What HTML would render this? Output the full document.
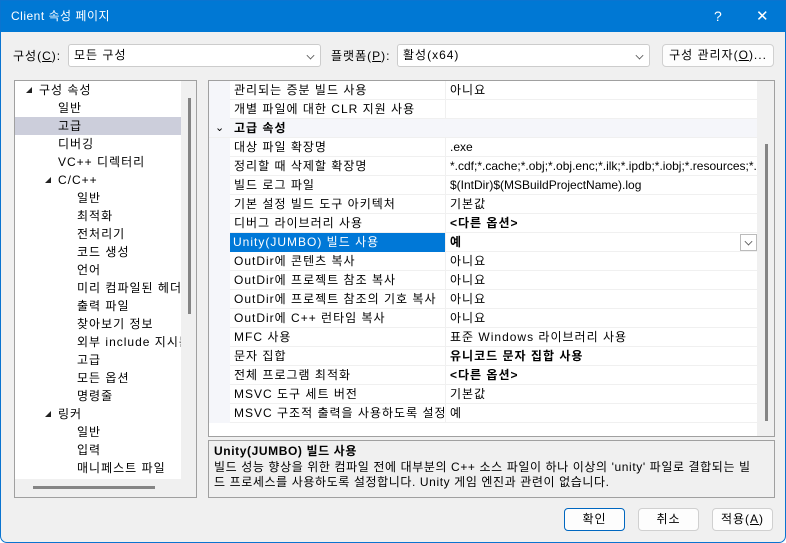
<!DOCTYPE html>
<html><head><meta charset="utf-8">
<style>
*{margin:0;padding:0;box-sizing:border-box}
body{width:786px;height:543px;overflow:hidden;background:#fff;font-family:"Liberation Sans","Noto Sans CJK KR",sans-serif;font-size:12px;color:#000}
.k{letter-spacing:1px}
.win{position:absolute;left:0;top:0;width:786px;height:543px;background:#f0f0f0;border:1px solid #0a74d0;border-radius:0 0 7px 7px;overflow:hidden}
.title{position:absolute;left:0;top:0;width:786px;height:31px;background:#0078d4;color:#fff;font-size:12px;line-height:31px;padding-left:10px}
.tb{position:absolute;top:0;color:#fff;font-size:14px;line-height:31px}
.abs{position:absolute;white-space:nowrap}
.combo{position:absolute;height:23px;background:#fff;border:1px solid #ccc;border-radius:3px;line-height:21px;padding-left:5px}
.chev{position:absolute;right:6px;top:7px;width:7px;height:7px;border-right:1px solid #555;border-bottom:1px solid #555;transform:rotate(45deg) scale(.8)}
.btn{position:absolute;height:23px;background:#fdfdfd;border:1px solid #d0d0d0;border-radius:4px;text-align:center;line-height:21px;letter-spacing:1px}
.tree{position:absolute;left:13px;top:79px;width:183px;height:418px;border:1px solid #a0a0a0;background:#f0f0f0;letter-spacing:1px}
.tw{position:absolute;left:0;top:0;width:166px;height:398px;background:#fff}
.ti{position:absolute;height:18px;line-height:18px;left:0;width:166px;white-space:nowrap;overflow:hidden}
.tri{position:absolute;width:0;height:0;border-left:6px solid transparent;border-bottom:6px solid #222;top:6px}
.grid{position:absolute;left:207px;top:79px;width:567px;height:357px;border:1px solid #a0a0a0;background:#fff}
.gut{position:absolute;left:0;top:0;width:21px;height:342px;background:#f5f6fa}
.row{position:absolute;left:21px;width:527px;height:19px;border-bottom:1px solid #f0f0f0;line-height:18px;white-space:nowrap}
.row .l{position:absolute;left:4px;width:210px;overflow:hidden;letter-spacing:1px}
.row .v{position:absolute;left:215px;width:312px;overflow:hidden;border-left:1px solid #f0f0f0;padding-left:4px;height:18px}
.desc{position:absolute;left:207px;top:439px;width:567px;height:58px;border:1px solid #a0a0a0;padding:3px 5px;line-height:15.5px;letter-spacing:0.6px}
</style></head><body>
<div class="win">
<div class="title k" style="letter-spacing:0.5px">Client 속성 페이지</div>
<div class="tb" style="left:713px">?</div>
<div class="tb" style="left:755px;font-size:15px">✕</div>

<div class="abs k" style="left:12px;top:46px">구성(<u>C</u>):</div>
<div class="combo k" style="left:67px;top:43px;width:253px">모든 구성<div class="chev"></div></div>
<div class="abs k" style="left:330px;top:46px">플랫폼(<u>P</u>):</div>
<div class="combo k" style="left:396px;top:43px;width:253px">활성(x64)<div class="chev"></div></div>
<div class="btn" style="left:661px;top:43px;width:112px">구성 관리자(<u>O</u>)...</div>

<div class="tree"><div class="tw">
<div class="ti" style="top:0"><span class="tri" style="left:11px"></span><span style="position:absolute;left:24px">구성 속성</span></div>
<div class="ti" style="top:18px"><span style="position:absolute;left:43px">일반</span></div>
<div class="ti" style="top:36px;background:#cccedb"><span style="position:absolute;left:43px">고급</span></div>
<div class="ti" style="top:54px"><span style="position:absolute;left:43px">디버깅</span></div>
<div class="ti" style="top:72px"><span style="position:absolute;left:43px">VC++ 디렉터리</span></div>
<div class="ti" style="top:90px"><span class="tri" style="left:30px"></span><span style="position:absolute;left:43px">C/C++</span></div>
<div class="ti" style="top:108px"><span style="position:absolute;left:62px">일반</span></div>
<div class="ti" style="top:126px"><span style="position:absolute;left:62px">최적화</span></div>
<div class="ti" style="top:144px"><span style="position:absolute;left:62px">전처리기</span></div>
<div class="ti" style="top:162px"><span style="position:absolute;left:62px">코드 생성</span></div>
<div class="ti" style="top:180px"><span style="position:absolute;left:62px">언어</span></div>
<div class="ti" style="top:198px"><span style="position:absolute;left:62px">미리 컴파일된 헤더</span></div>
<div class="ti" style="top:216px"><span style="position:absolute;left:62px">출력 파일</span></div>
<div class="ti" style="top:234px"><span style="position:absolute;left:62px">찾아보기 정보</span></div>
<div class="ti" style="top:252px"><span style="position:absolute;left:62px">외부 include 지시문</span></div>
<div class="ti" style="top:270px"><span style="position:absolute;left:62px">고급</span></div>
<div class="ti" style="top:288px"><span style="position:absolute;left:62px">모든 옵션</span></div>
<div class="ti" style="top:306px"><span style="position:absolute;left:62px">명령줄</span></div>
<div class="ti" style="top:324px"><span class="tri" style="left:30px"></span><span style="position:absolute;left:43px">링커</span></div>
<div class="ti" style="top:342px"><span style="position:absolute;left:62px">일반</span></div>
<div class="ti" style="top:360px"><span style="position:absolute;left:62px">입력</span></div>
<div class="ti" style="top:378px"><span style="position:absolute;left:62px">매니페스트 파일</span></div>
</div>
<div style="position:absolute;left:173px;top:17px;width:3px;height:216px;background:#858585"></div>
<div style="position:absolute;left:18px;top:405px;width:122px;height:3px;background:#858585"></div>
</div>

<div class="grid">
<div class="gut"></div>
<div class="row" style="top:0"><span class="l">관리되는 증분 빌드 사용</span><span class="v k">아니요</span></div>
<div class="row" style="top:19px"><span class="l">개별 파일에 대한 CLR 지원 사용</span><span class="v"></span></div>
<div class="row" style="top:38px;left:0;width:548px;background:#f5f6fa;font-weight:bold"><span style="position:absolute;left:6px;font-weight:normal;font-size:11px">⌄</span><span class="l" style="left:25px">고급 속성</span></div>
<div class="row" style="top:57px"><span class="l">대상 파일 확장명</span><span class="v">.exe</span></div>
<div class="row" style="top:76px"><span class="l">정리할 때 삭제할 확장명</span><span class="v">*.cdf;*.cache;*.obj;*.obj.enc;*.ilk;*.ipdb;*.iobj;*.resources;*.tlb</span></div>
<div class="row" style="top:95px"><span class="l">빌드 로그 파일</span><span class="v">$(IntDir)$(MSBuildProjectName).log</span></div>
<div class="row" style="top:114px"><span class="l">기본 설정 빌드 도구 아키텍처</span><span class="v k">기본값</span></div>
<div class="row" style="top:133px"><span class="l">디버그 라이브러리 사용</span><span class="v k" style="font-weight:bold">&lt;다른 옵션&gt;</span></div>
<div class="row" style="top:152px"><span class="l" style="background:#0078d7;color:#fff;left:0;padding-left:3px;width:215px;height:19px">Unity(JUMBO) 빌드 사용</span><span class="v" style="font-weight:bold">예</span><span style="position:absolute;left:510px;top:1px;width:17px;height:17px;border:1px solid #bbb;background:#fff"><span class="chev" style="right:4px;top:3px"></span></span></div>
<div class="row" style="top:171px"><span class="l">OutDir에 콘텐츠 복사</span><span class="v k">아니요</span></div>
<div class="row" style="top:190px"><span class="l">OutDir에 프로젝트 참조 복사</span><span class="v k">아니요</span></div>
<div class="row" style="top:209px"><span class="l">OutDir에 프로젝트 참조의 기호 복사</span><span class="v k">아니요</span></div>
<div class="row" style="top:228px"><span class="l">OutDir에 C++ 런타임 복사</span><span class="v k">아니요</span></div>
<div class="row" style="top:247px"><span class="l">MFC 사용</span><span class="v k">표준 Windows 라이브러리 사용</span></div>
<div class="row" style="top:266px"><span class="l">문자 집합</span><span class="v k" style="font-weight:bold">유니코드 문자 집합 사용</span></div>
<div class="row" style="top:285px"><span class="l">전체 프로그램 최적화</span><span class="v k" style="font-weight:bold">&lt;다른 옵션&gt;</span></div>
<div class="row" style="top:304px"><span class="l">MSVC 도구 세트 버전</span><span class="v k">기본값</span></div>
<div class="row" style="top:323px"><span class="l">MSVC 구조적 출력을 사용하도록 설정합니다</span><span class="v">예</span></div>
<div style="position:absolute;left:548px;top:0;width:17px;height:355px;background:#f0f0f0"></div>
<div style="position:absolute;left:556px;top:63px;width:3px;height:277px;background:#858585"></div>
</div>

<div class="desc">
<div style="font-weight:bold">Unity(JUMBO) 빌드 사용</div>
<div>빌드 성능 향상을 위한 컴파일 전에 대부분의 C++ 소스 파일이 하나 이상의 'unity' 파일로 결합되는 빌<br>드 프로세스를 사용하도록 설정합니다. Unity 게임 엔진과 관련이 없습니다.</div>
</div>

<div class="btn" style="left:563px;top:507px;width:61px;border:1px solid #0067c0">확인</div>
<div class="btn" style="left:637px;top:507px;width:61px">취소</div>
<div class="btn" style="left:711px;top:507px;width:61px">적용(<u>A</u>)</div>
</div>
</body></html>
